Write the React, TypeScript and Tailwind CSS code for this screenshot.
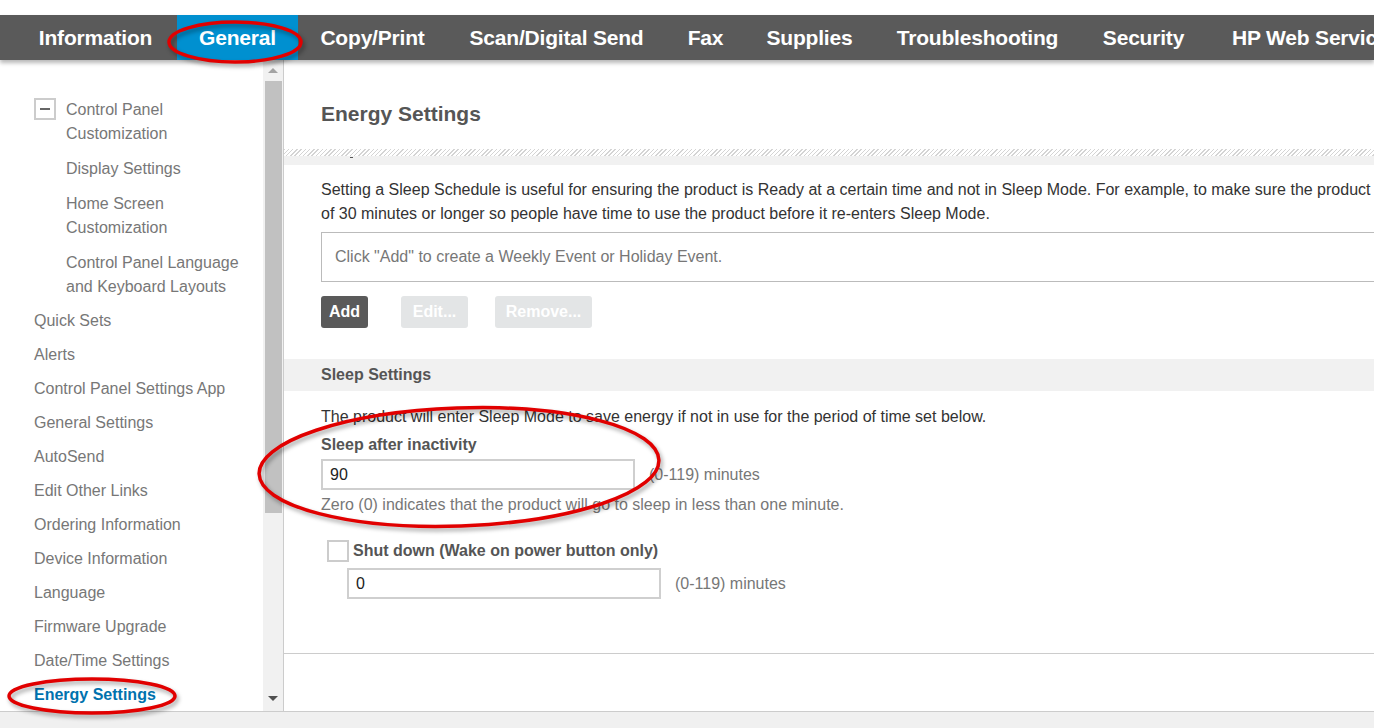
import React from "react";

const NAV = [
  { label: "Information", w: "w-[163px]" },
  { label: "General", w: "w-[121px]", active: true },
  { label: "Copy/Print", w: "w-[149px]" },
  { label: "Scan/Digital Send", w: "w-[219px]" },
  { label: "Fax", w: "w-[79px]" },
  { label: "Supplies", w: "w-[129px]" },
  { label: "Troubleshooting", w: "w-[207px]" },
  { label: "Security", w: "w-[125px]" },
  { label: "HP Web Services", w: "w-[220px]" },
];

const SIDE = [
  "Quick Sets",
  "Alerts",
  "Control Panel Settings App",
  "General Settings",
  "AutoSend",
  "Edit Other Links",
  "Ordering Information",
  "Device Information",
  "Language",
  "Firmware Upgrade",
  "Date/Time Settings",
];

const Sidebar = () => (
  <aside className="flex w-[284px] flex-none border-r border-[#cccccc]">
    <div className="flex w-[263px] flex-col gap-[10px] pt-[38px] text-[16px] leading-[24px] text-[#777777]">
      <div className="flex items-start">
        <div className="ml-[34px] flex h-[22px] w-[22px] items-center justify-center border-2 border-[#cccccc]">
          <div className="h-[2px] w-[10px] bg-[#666666]" />
        </div>
        <div className="ml-[10px]">
          Control Panel
          <br />
          Customization
        </div>
      </div>
      <div className="mt-px pl-[66px]">Display Settings</div>
      <div className="mt-px pl-[66px]">
        Home Screen
        <br />
        Customization
      </div>
      <div className="mt-px pl-[66px]">
        Control Panel Language
        <br />
        and Keyboard Layouts
      </div>
      {SIDE.map((s) => (
        <div key={s} className="pl-[34px] whitespace-nowrap">
          {s}
        </div>
      ))}
      <div className="pl-[34px] font-bold text-[#0072ae]">Energy Settings</div>
    </div>
    {/* scrollbar */}
    <div className="flex w-[20px] flex-col items-center bg-[#f1f1f1] pt-[8px]">
      <div className="h-0 w-0 border-x-[5px] border-b-[5px] border-x-transparent border-b-[#a3a3a3]" />
      <div className="mt-[8px] h-[432px] w-[17px] bg-[#c1c1c1]" />
      <div className="mt-auto mb-[10px] h-0 w-0 border-x-[5px] border-t-[5px] border-x-transparent border-t-[#505050]" />
    </div>
  </aside>
);

const Main = () => (
  <main className="flex-1 overflow-hidden">
    <h1 className="pl-[37px] pt-[40px] text-[21px] font-bold leading-[28px] text-[#555555]">
      Energy Settings
    </h1>
    <div className="mt-[21px] h-[7px] bg-[repeating-linear-gradient(135deg,#d4d4d4_0,#d4d4d4_1px,#ffffff_1px,#ffffff_3px)]" />
    <div className="h-[9px] bg-[#f1f1f1] pl-[66px] pt-[1px]">
      <div className="h-px w-[3px] bg-[#555555]" />
    </div>

    <div className="pl-[37px] text-[16px] leading-[24px]">
      <div className="mt-[13px] whitespace-nowrap text-[#333333]">
        Setting a Sleep Schedule is useful for ensuring the product is Ready at a certain time and not in Sleep Mode. For example, to make sure the product is Ready
        <br />
        of 30 minutes or longer so people have time to use the product before it re-enters Sleep Mode.
      </div>
      <div className="mt-[6px] flex h-[50px] w-[1100px] items-center border border-[#bbbbbb] pl-[13px] text-[#777777]">
        Click "Add" to create a Weekly Event or Holiday Event.
      </div>
      <div className="mt-[14px] flex h-[32px] font-bold text-white">
        <div className="flex w-[47px] items-center justify-center rounded-[3px] bg-[#5a5a5a]">Add</div>
        <div className="ml-[33px] flex w-[67px] items-center justify-center rounded-[3px] bg-[#e3e5e6]">Edit...</div>
        <div className="ml-[27px] flex w-[97px] items-center justify-center rounded-[3px] bg-[#e3e5e6]">Remove...</div>
      </div>
    </div>

    <div className="mt-[31px] flex h-[32px] items-center bg-[#f1f1f1] pl-[37px] text-[16px] font-bold text-[#555555]">
      Sleep Settings
    </div>

    <div className="pl-[37px] text-[16px] leading-[24px]">
      <div className="mt-[14px] text-[#333333]">
        The product will enter Sleep Mode to save energy if not in use for the period of time set below.
      </div>
      <div className="mt-[4px] font-bold text-[#555555]">Sleep after inactivity</div>
      <div className="mt-[2px] flex items-center">
        <div className="flex h-[31px] w-[314px] items-center border-2 border-[#cfcfcf] pl-[7px] text-[#222222]">90</div>
        <span className="ml-[14px] text-[#777777]">(0-119) minutes</span>
      </div>
      <div className="mt-[3px] text-[#777777]">
        Zero (0) indicates that the product will go to sleep in less than one minute.
      </div>
      <div className="mt-[22px] flex items-center pl-[6px]">
        <div className="h-[22px] w-[22px] border-2 border-[#cccccc]" />
        <span className="ml-[4px] font-bold text-[#555555]">Shut down (Wake on power button only)</span>
      </div>
      <div className="mt-[5px] flex items-center pl-[26px]">
        <div className="flex h-[31px] w-[314px] items-center border-2 border-[#cfcfcf] pl-[7px] text-[#222222]">0</div>
        <span className="ml-[14px] text-[#777777]">(0-119) minutes</span>
      </div>
    </div>
    <div className="mt-[54px] border-t border-[#cccccc]" />
  </main>
);

const Ring = ({ cx, cy, rx, ry, rot = 0 }: { cx: number; cy: number; rx: number; ry: number; rot?: number }) => (
  <ellipse
    cx={cx}
    cy={cy}
    rx={rx}
    ry={ry}
    transform={`rotate(${rot} ${cx} ${cy})`}
    fill="none"
    stroke="#e10000"
    strokeWidth={3.5}
  />
);

export default function App() {
  return (
    <div className="relative h-[728px] w-[1374px] overflow-hidden bg-white font-['Liberation_Sans',Arial,sans-serif]">
      <div className="h-[15px]" />
      <nav className="relative z-10 flex h-[45px] bg-[#5a5a5a] pl-[14px] shadow-[0_3px_4px_rgba(0,0,0,0.28)]">
        {NAV.map((n) => (
          <div
            key={n.label}
            className={`${n.w} flex flex-none items-center justify-center whitespace-nowrap text-[21px] font-bold tracking-[-0.2px] text-white ${
              n.active ? "bg-[#0090d0]" : ""
            }`}
          >
            {n.label}
          </div>
        ))}
      </nav>
      <div className="flex h-[651px]">
        <Sidebar />
        <Main />
      </div>
      <div className="h-[17px] border-t border-[#cccccc] bg-[#f0f0f0]" />

      {/* annotation rings */}
      <svg
        className="pointer-events-none absolute left-0 top-0 z-20 drop-shadow-[2px_3px_2px_rgba(0,0,0,0.35)]"
        width={1374}
        height={728}
      >
        <Ring cx={235} cy={42} rx={66} ry={20} />
        <Ring cx={92} cy={696} rx={83} ry={17} />
        <Ring cx={459} cy={467} rx={200} ry={59} rot={-2} />
      </svg>
    </div>
  );
}
